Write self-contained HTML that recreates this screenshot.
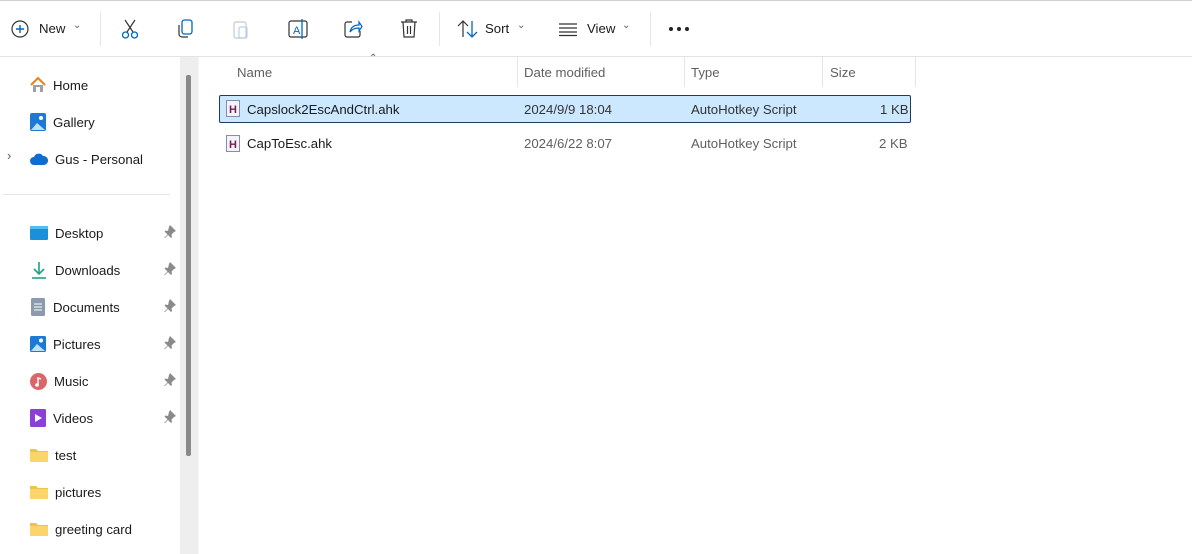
<!DOCTYPE html>
<html><head><meta charset="utf-8"><style>
body{margin:0;width:1192px;height:554px;background:#fff;font-family:"Segoe UI","Liberation Sans",sans-serif;font-size:13.2px;color:#1a1a1a;position:relative;overflow:hidden}
.a{position:absolute;white-space:nowrap}
.sep{position:absolute;width:1px;background:#e5e5e5}
.nav{position:absolute;left:30px;height:20px;display:flex;align-items:center}
.nav span{margin-left:7px}
.pin{position:absolute;left:163px}
.gr{color:#5f5f5f}
</style></head><body>
<svg width="0" height="0" style="position:absolute"><defs><g id="pin"><path d="M7 1l6 6-2 1-2.5 2.5 0.5 2.5-1 1-3-3-3.5 3.5-0.5-0.5 3.5-3.5-3-3 1-1 2.5 0.5L6 3z" fill="#8a8a8a"/></g></defs></svg>
<div class="a" style="left:0;top:0;width:1192px;height:1px;background:#d0d0d0"></div>
<div class="a" style="left:0;top:56px;width:1192px;height:1px;background:#e3e3e3"></div>
<svg class="a" style="left:10px;top:19px" width="20" height="20" viewBox="0 0 20 20"><circle cx="10" cy="10" r="8" fill="none" stroke="#333" stroke-width="1.2"/><path d="M10 6v8M6 10h8" stroke="#0067c0" stroke-width="1.4"/></svg>
<div class="a" style="left:39px;top:21px">New</div><div class="a gr" style="left:73px;top:20px;font-size:10px">&#8964;</div>
<div class="sep" style="left:100px;top:12px;height:34px"></div>
<svg class="a" style="left:120px;top:18px" width="20" height="22" viewBox="0 0 20 22"><path d="M5 2l8 12M15 2L7 14" stroke="#333" stroke-width="1.2" fill="none"/><circle cx="5.5" cy="17" r="3" fill="none" stroke="#0067c0" stroke-width="1.3"/><circle cx="14.5" cy="17" r="3" fill="none" stroke="#0067c0" stroke-width="1.3"/></svg>
<svg class="a" style="left:176px;top:18px" width="20" height="22" viewBox="0 0 20 22"><rect x="6" y="2" width="10" height="14" rx="2.5" fill="none" stroke="#0067c0" stroke-width="1.3"/><path d="M3 7v9a3 3 0 0 0 3 3h6" fill="none" stroke="#333" stroke-width="1.2"/></svg>
<svg class="a" style="left:231px;top:18px" width="20" height="22" viewBox="0 0 20 22"><rect x="3" y="4" width="12" height="16" rx="2" fill="none" stroke="#c8c8c8" stroke-width="1.2"/><rect x="8" y="9" width="8" height="11" rx="1.5" fill="none" stroke="#b5d3ee" stroke-width="1.2"/></svg>
<svg class="a" style="left:287px;top:18px" width="22" height="22" viewBox="0 0 22 22"><rect x="2" y="3" width="18" height="16" rx="2" fill="none" stroke="#333" stroke-width="1.2"/><text x="6" y="16" font-size="11" fill="#0067c0" font-family="Liberation Sans">A</text><path d="M15 1v20" stroke="#0067c0" stroke-width="1.3"/></svg>
<svg class="a" style="left:343px;top:18px" width="20" height="22" viewBox="0 0 20 22"><path d="M9 4H4a2 2 0 0 0-2 2v11a2 2 0 0 0 2 2h11a2 2 0 0 0 2-2v-4" fill="none" stroke="#333" stroke-width="1.2"/><path d="M7 14c1-5 4-7 9-7V4l3 4.5-3 4.5V10c-4 0-7 1-9 4z" fill="none" stroke="#0067c0" stroke-width="1.2"/></svg>
<svg class="a" style="left:399px;top:18px" width="20" height="22" viewBox="0 0 20 22"><path d="M2 4h16M7 4V2h6v2M4 4l1 15h10l1-15M8.5 8v8M11.5 8v8" fill="none" stroke="#333" stroke-width="1.2"/></svg>
<div class="sep" style="left:439px;top:12px;height:34px"></div>
<svg class="a" style="left:457px;top:19px" width="22" height="20" viewBox="0 0 22 20"><path d="M6 18V2M1 7l5-5 5 5" fill="none" stroke="#333" stroke-width="1.2"/><path d="M15 2v16M10 13l5 5 5-5" fill="none" stroke="#0067c0" stroke-width="1.3"/></svg>
<div class="a" style="left:485px;top:21px">Sort</div><div class="a gr" style="left:517px;top:20px;font-size:10px">&#8964;</div>
<svg class="a" style="left:558px;top:21px" width="20" height="16" viewBox="0 0 20 16"><path d="M1 3h18M1 7h18M1 11h18M1 14.5h18" stroke="#333" stroke-width="1.2"/></svg>
<div class="a" style="left:587px;top:21px">View</div><div class="a gr" style="left:622px;top:20px;font-size:10px">&#8964;</div>
<div class="sep" style="left:650px;top:12px;height:34px"></div>
<svg class="a" style="left:668px;top:26px" width="22" height="6"><circle cx="3" cy="3" r="2" fill="#222"/><circle cx="11" cy="3" r="2" fill="#222"/><circle cx="19" cy="3" r="2" fill="#222"/></svg>
<div class="a" style="left:180px;top:57px;width:18px;height:497px;background:#eeeeee"></div>
<div class="a" style="left:186px;top:75px;width:5px;height:381px;background:#8a8a8a;border-radius:2px"></div>
<div class="a" style="left:198px;top:57px;width:1px;height:497px;background:#f5f5f5"></div>
<div class="nav" style="top:75px"><svg width="16" height="16" viewBox="0 0 16 16"><path d="M1 8L8 1l7 7" fill="none" stroke="#e8811a" stroke-width="2"/><path d="M3 8v7h10V8" fill="#a0a0a0"/><rect x="6" y="10" width="4" height="5" fill="#fff"/></svg><span>Home</span></div>
<div class="nav" style="top:112px"><svg width="16" height="18" viewBox="0 0 16 18"><rect x="0" y="0" width="16" height="18" rx="2" fill="#1d7ad4"/><circle cx="11" cy="5" r="2" fill="#fff"/><path d="M1 17l6-7 8 7z" fill="#bde0fb"/></svg><span>Gallery</span></div>
<div class="a gr" style="left:7px;top:148px;font-size:13px">&#8250;</div>
<div class="nav" style="top:149px"><svg width="18" height="12" viewBox="0 0 18 12"><path d="M4 12a4 4 0 0 1 0-8 5 5 0 0 1 9-1 4.5 4.5 0 0 1 1 9z" fill="#0f6cd2"/></svg><span>Gus - Personal</span></div>
<div class="a" style="left:3px;top:194px;width:167px;height:1px;background:#e5e5e5"></div>
<div class="nav" style="top:223px"><svg width="18" height="14"><rect width="18" height="14" rx="1" fill="#1b8fd8"/><rect width="18" height="3" fill="#4cc2ef"/></svg><span>Desktop</span></div><svg class="pin" style="top:224px" width="14" height="14"><use href="#pin"/></svg>
<div class="nav" style="top:260px"><svg width="18" height="18" viewBox="0 0 18 18"><path d="M9 1v11M4 8l5 5 5-5" fill="none" stroke="#1ca386" stroke-width="1.6"/><path d="M2 17h14" stroke="#1ca386" stroke-width="1.6"/></svg><span>Downloads</span></div><svg class="pin" style="top:261px" width="14" height="14"><use href="#pin"/></svg>
<div class="nav" style="top:297px"><svg width="16" height="18"><rect x="1" width="14" height="18" rx="1.5" fill="#8c9aae"/><path d="M4 6h8M4 9h8M4 12h8" stroke="#fff"/></svg><span>Documents</span></div><svg class="pin" style="top:298px" width="14" height="14"><use href="#pin"/></svg>
<div class="nav" style="top:334px"><svg width="16" height="16" viewBox="0 0 16 16"><rect width="16" height="16" rx="1.5" fill="#1d7ad4"/><circle cx="11" cy="4.5" r="2" fill="#fff"/><path d="M1 15l6-7 8 7z" fill="#bde0fb"/></svg><span>Pictures</span></div><svg class="pin" style="top:335px" width="14" height="14"><use href="#pin"/></svg>
<div class="nav" style="top:371px"><svg width="17" height="17"><circle cx="8.5" cy="8.5" r="8.5" fill="#d9676a"/><path d="M8 12V5l3 1" stroke="#fff" stroke-width="1.4" fill="none"/><circle cx="7" cy="12" r="1.8" fill="#fff"/></svg><span>Music</span></div><svg class="pin" style="top:372px" width="14" height="14"><use href="#pin"/></svg>
<div class="nav" style="top:408px"><svg width="16" height="18"><rect width="16" height="18" rx="1.5" fill="#8a3fd8"/><path d="M5 5l7 4-7 4z" fill="#fff"/></svg><span>Videos</span></div><svg class="pin" style="top:409px" width="14" height="14"><use href="#pin"/></svg>
<div class="nav" style="top:445px"><svg width="18" height="14"><path d="M0 1h6l2 2h10v11H0z" fill="#f0c24a"/><rect y="4" width="18" height="10" fill="#fbd56a"/></svg><span>test</span></div>
<div class="nav" style="top:482px"><svg width="18" height="14"><path d="M0 1h6l2 2h10v11H0z" fill="#f0c24a"/><rect y="4" width="18" height="10" fill="#fbd56a"/></svg><span>pictures</span></div>
<div class="nav" style="top:519px"><svg width="18" height="14"><path d="M0 1h6l2 2h10v11H0z" fill="#f0c24a"/><rect y="4" width="18" height="10" fill="#fbd56a"/></svg><span>greeting card</span></div>
<div class="a gr" style="left:369px;top:53px;font-size:10px">&#8963;</div>
<div class="a gr" style="left:237px;top:65px">Name</div>
<div class="sep" style="left:517px;top:57px;height:30px"></div>
<div class="a gr" style="left:524px;top:65px">Date modified</div>
<div class="sep" style="left:684px;top:57px;height:30px"></div>
<div class="a gr" style="left:691px;top:65px">Type</div>
<div class="sep" style="left:822px;top:57px;height:30px"></div>
<div class="a gr" style="left:830px;top:65px">Size</div>
<div class="sep" style="left:915px;top:57px;height:30px"></div>
<div class="a" style="left:219px;top:95px;width:690px;height:26px;background:#cce8ff;border:1px solid #1f3c5a;border-radius:2px"></div>
<svg class="a" style="left:226px;top:100px" width="14" height="17"><rect x=".5" y=".5" width="13" height="16" fill="#f3f3fb" stroke="#8a8ab0"/><text x="3" y="13" font-size="11" font-weight="bold" fill="#7a1f4a" font-family="Liberation Sans">H</text></svg>
<div class="a" style="left:247px;top:102px">Capslock2EscAndCtrl.ahk</div>
<div class="a" style="left:524px;top:102px;color:#333">2024/9/9 18:04</div>
<div class="a" style="left:691px;top:102px;color:#333">AutoHotkey Script</div>
<div class="a" style="left:880px;top:102px;color:#333">1 KB</div>
<svg class="a" style="left:226px;top:135px" width="14" height="17"><rect x=".5" y=".5" width="13" height="16" fill="#f3f3fb" stroke="#8a8ab0"/><text x="3" y="13" font-size="11" font-weight="bold" fill="#7a1f4a" font-family="Liberation Sans">H</text></svg>
<div class="a" style="left:247px;top:136px">CapToEsc.ahk</div>
<div class="a gr" style="left:524px;top:136px">2024/6/22 8:07</div>
<div class="a gr" style="left:691px;top:136px">AutoHotkey Script</div>
<div class="a gr" style="left:879px;top:136px">2 KB</div>
</body></html>
